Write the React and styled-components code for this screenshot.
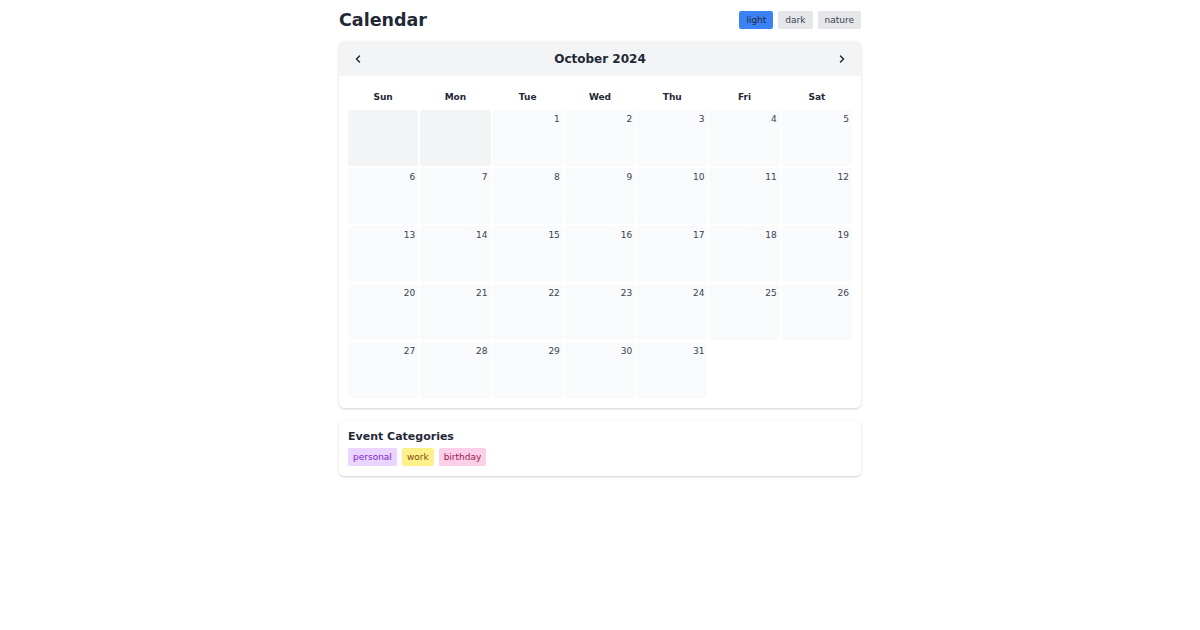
import React from 'react'
import styled, { createGlobalStyle } from 'styled-components'

const Global = createGlobalStyle`
  body {
    margin: 0;
    background: #ffffff;
    font-family: "DejaVu Sans", Verdana, sans-serif;
    color: #1f2937;
  }
`

const Page = styled.main`
  width: 522px;
  margin: 0 auto;
  padding-top: 8px;
`

const Header = styled.header`
  display: flex;
  justify-content: space-between;
  align-items: center;
  height: 24px;
  margin-bottom: 9px;
`

const Title = styled.h1`
  margin: 0;
  font-size: 17.5px;
  font-weight: 700;
  color: #1f2937;
`

const Themes = styled.div`
  display: flex;
  gap: 5px;
`

const ThemeButton = styled.button`
  font-family: inherit;
  font-size: 9px;
  height: 18px;
  padding: 0 7px;
  border: none;
  border-radius: 2px;
  cursor: pointer;
  background: ${p => (p.$active ? '#3b82f6' : '#e5e7eb')};
  color: ${p => (p.$active ? '#1f2937' : '#374151')};
`

const Card = styled.section`
  background: #ffffff;
  border-radius: 5px;
  box-shadow: 0 1px 3px rgba(0, 0, 0, 0.12), 0 1px 2px rgba(0, 0, 0, 0.06);
  overflow: hidden;
  margin-bottom: 13px;
`

const MonthBar = styled.div`
  display: flex;
  justify-content: space-between;
  align-items: center;
  height: 35px;
  padding: 0 12px;
  background: #f3f4f6;
`

const MonthTitle = styled.h2`
  margin: 0;
  font-size: 12px;
  font-weight: 700;
  color: #1f2937;
`

const NavButton = styled.button`
  display: flex;
  align-items: center;
  justify-content: center;
  width: 14px;
  height: 14px;
  padding: 0;
  border: none;
  background: none;
  color: #1f2937;
  cursor: pointer;
`

const Body = styled.div`
  padding: 13px 9px 10px;
`

const Grid = styled.div`
  display: grid;
  grid-template-columns: repeat(7, 1fr);
  column-gap: 2px;
  row-gap: 2px;
`

const DayName = styled.div`
  text-align: center;
  font-size: 9px;
  font-weight: 700;
  color: #1f2937;
  height: 17px;
  line-height: 16px;
  margin-bottom: 2px;
`

const Cell = styled.div`
  height: 56px;
  border-radius: 3px;
  background: ${p => (p.$blank ? '#f3f4f6' : p.$none ? 'transparent' : '#f9fafb')};
  font-size: 9px;
  color: #374151;
  text-align: right;
  padding: 4px 3px 0 0;
  box-sizing: border-box;
`

const Legend = styled.div`
  padding: 9px 9px 10px;
`

const LegendTitle = styled.h3`
  margin: 0 0 5px;
  font-size: 11px;
  font-weight: 700;
  color: #1f2937;
`

const Tags = styled.div`
  display: flex;
  gap: 5px;
`

const tagColors = {
  personal: ['#e9d5ff', '#7e22ce'],
  work: ['#fef08a', '#854d0e'],
  birthday: ['#fbcfe8', '#9d174d'],
}

const Tag = styled.span`
  display: inline-flex;
  align-items: center;
  height: 18px;
  padding: 0 5px;
  border-radius: 2px;
  font-size: 9px;
  background: ${p => tagColors[p.$kind][0]};
  color: ${p => tagColors[p.$kind][1]};
`

const Chevron = ({ dir }) => (
  <svg width="12" height="12" viewBox="0 0 24 24" fill="none" stroke="currentColor" strokeWidth="3" strokeLinecap="round" strokeLinejoin="round">
    {dir === 'left' ? <path d="M15 18l-6-6 6-6" /> : <path d="M9 18l6-6-6-6" />}
  </svg>
)

const days = ['Sun', 'Mon', 'Tue', 'Wed', 'Thu', 'Fri', 'Sat']

export default function App() {
  const cells = []
  for (let i = 0; i < 2; i++) cells.push({ key: 'b' + i, blank: true })
  for (let d = 1; d <= 31; d++) cells.push({ key: 'd' + d, day: d })
  while (cells.length % 7) cells.push({ key: 'n' + cells.length, none: true })

  return (
    <>
      <Global />
      <Page>
        <Header>
          <Title>Calendar</Title>
          <Themes>
            <ThemeButton $active>light</ThemeButton>
            <ThemeButton>dark</ThemeButton>
            <ThemeButton>nature</ThemeButton>
          </Themes>
        </Header>
        <Card>
          <MonthBar>
            <NavButton><Chevron dir="left" /></NavButton>
            <MonthTitle>October 2024</MonthTitle>
            <NavButton><Chevron dir="right" /></NavButton>
          </MonthBar>
          <Body>
            <Grid>
              {days.map(d => <DayName key={d}>{d}</DayName>)}
              {cells.map(c => (
                <Cell key={c.key} $blank={c.blank} $none={c.none}>{c.day}</Cell>
              ))}
            </Grid>
          </Body>
        </Card>
        <Card>
          <Legend>
            <LegendTitle>Event Categories</LegendTitle>
            <Tags>
              <Tag $kind="personal">personal</Tag>
              <Tag $kind="work">work</Tag>
              <Tag $kind="birthday">birthday</Tag>
            </Tags>
          </Legend>
        </Card>
      </Page>
    </>
  )
}
